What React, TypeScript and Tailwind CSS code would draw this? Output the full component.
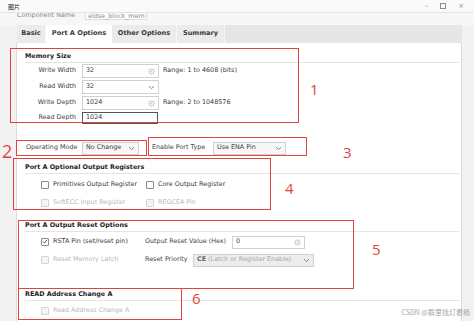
import React from 'react';

const RED = 'border-[#e0443c]';

const Chevron = () => (
  <svg width="7" height="5" viewBox="0 0 7 5" className="shrink-0">
    <path d="M1 1.2 L3.5 3.6 L6 1.2" fill="none" stroke="#777" strokeWidth="0.9" />
  </svg>
);

const ClearIcon = () => (
  <svg width="7" height="7" viewBox="0 0 7 7" className="shrink-0">
    <circle cx="3.5" cy="3.5" r="2.6" fill="none" stroke="#b5b5b5" strokeWidth="0.8" />
    <circle cx="3.5" cy="3.5" r="1" fill="#c8c8c8" />
  </svg>
);

const Check = ({ checked = false, disabled = false, label }: { checked?: boolean; disabled?: boolean; label: string }) => (
  <div className={`flex items-center gap-[4px] ${disabled ? 'text-[#b8b8b8]' : 'text-[#3a3a3a]'}`}>
    <div
      className={`w-[8px] h-[8px] rounded-[1px] border flex items-center justify-center ${
        disabled ? 'border-[#d4d4d4] bg-[#f4f4f4]' : 'border-[#8a8a8a] bg-white'
      }`}
    >
      {checked && (
        <svg width="7" height="7" viewBox="0 0 7 7">
          <path d="M1.2 3.6 L2.8 5.2 L5.9 1.6" fill="none" stroke="#333" strokeWidth="1" />
        </svg>
      )}
    </div>
    <span>{label}</span>
  </div>
);

const TextBox = ({ value, width, icon = true, focused = false, height = 'h-[14px]' }: { value: string; width: string; icon?: boolean; focused?: boolean; height?: string }) => (
  <div
    className={`${width} ${height} flex items-center justify-between px-[3px] bg-white border ${
      focused ? 'border-[#555]' : 'border-[#d0d0d0]'
    }`}
  >
    <span>{value}</span>
    {icon && <ClearIcon />}
  </div>
);

const Select = ({ value, width, muted = false }: { value: React.ReactNode; width: string; muted?: boolean }) => (
  <div
    className={`${width} h-[13px] flex items-center justify-between px-[3px] border border-[#d0d0d0] ${
      muted ? 'bg-[#ededed] text-[#a8a8a8]' : 'bg-[#f7f7f7]'
    }`}
  >
    <span className="whitespace-nowrap">{value}</span>
    <Chevron />
  </div>
);

const Header = ({ title, className = '' }: { title: string; className?: string }) => (
  <div className={`h-[11px] ml-[8px] mr-[2px] flex items-center font-bold text-[#222] border-b border-[#e4e4e4] ${className}`}>
    {title}
  </div>
);

const Label = ({ text }: { text: string }) => (
  <div className="w-[60px] pr-[1px] text-right text-[#444] whitespace-nowrap">{text}</div>
);

export default function App() {
  return (
    <div className="relative w-[474px] h-[321px] overflow-hidden bg-[#f2f2f2] font-['DejaVu_Sans',sans-serif] text-[6.4px] text-[#3a3a3a]">
      {/* title bar */}
      <div className="h-[12px] bg-[#fafafa] flex items-center justify-between pl-[8px] pr-[10px]">
        <span className="text-[6px] text-[#222] font-['Noto_Sans_CJK_SC',sans-serif]">图片</span>
        <div className="flex items-center gap-[12px] text-[#8c8c8c] text-[7px]">
          <span>–</span>
          <span className="w-[6px] h-[6px] border border-[#8c8c8c]" />
          <span>×</span>
        </div>
      </div>

      {/* component name (cut off) */}
      <div className="h-[13px] bg-[#f7f7f7] border-t border-[#e4e4e4] flex items-start pl-[17px] overflow-hidden">
        <div className="flex items-center gap-[10px] -mt-[2px] text-[#888]">
          <span>Component Name</span>
          <span className="w-[62px] h-[9px] bg-white border border-[#ddd] px-[2px] leading-[8px]">eldse_block_mem</span>
        </div>
      </div>

      {/* tabs */}
      <div className="h-[18px] ml-[17px] w-[445px] bg-[#e6e6e6] flex items-stretch font-bold text-[6.6px] text-[#3a3a3a]">
        <div className="w-[29px] flex items-center justify-center bg-[#ebebeb] border-r border-[#f6f6f6]">Basic</div>
        <div className="w-[66px] flex items-center justify-center bg-white">Port A Options</div>
        <div className="w-[65px] flex items-center justify-center bg-[#ebebeb] border-r border-[#f6f6f6]">Other Options</div>
        <div className="w-[48px] flex items-center justify-center bg-[#ebebeb] border-r border-[#f6f6f6]">Summary</div>
      </div>

      {/* panel */}
      <div className="absolute left-[16px] top-[43px] w-[446px] bottom-0 bg-white border-l border-r border-[#dcdcdc] flex flex-col">
        <Header title="Memory Size" className="mt-[9px]" />
        <div className="h-[16px] flex items-center gap-[5px]">
          <Label text="Write Width" />
          <TextBox value="32" width="w-[77px]" />
          <span className="ml-[-1px]">Range: 1 to 4608 (bits)</span>
        </div>
        <div className="h-[16px] flex items-center gap-[5px]">
          <Label text="Read Width" />
          <div className="w-[77px] h-[14px] flex items-center justify-between px-[3px] bg-white border border-[#d0d0d0]">
            <span>32</span>
            <Chevron />
          </div>
        </div>
        <div className="h-[16px] flex items-center gap-[5px]">
          <Label text="Write Depth" />
          <TextBox value="1024" width="w-[77px]" />
          <span className="ml-[-1px]">Range: 2 to 1048576</span>
        </div>
        <div className="h-[13px] flex items-center gap-[5px]">
          <Label text="Read Depth" />
          <TextBox value="1024" width="w-[76px]" icon={false} focused height="h-[12px]" />
        </div>

        <div className="h-[16px] mt-[16px] flex items-center">
          <span className="ml-[9px] w-[56px] text-[#444]">Operating Mode</span>
          <Select value="No Change" width="w-[57px]" />
          <span className="ml-[13px] w-[61px] text-[#444]">Enable Port Type</span>
          <Select value="Use ENA Pin" width="w-[73px]" />
        </div>

        <Header title="Port A Optional Output Registers" className="mt-[7px]" />
        <div className="h-[16px] mt-[3px] flex items-center pl-[24px]">
          <div className="w-[105px]">
            <Check label="Primitives Output Register" />
          </div>
          <Check label="Core Output Register" />
        </div>
        <div className="h-[16px] mt-[2px] flex items-center pl-[24px]">
          <div className="w-[105px]">
            <Check label="SoftECC Input Register" disabled />
          </div>
          <Check label="REGCEA Pin" disabled />
        </div>

        <Header title="Port A Output Reset Options" className="mt-[10px]" />
        <div className="h-[16px] mt-[2px] flex items-center pl-[24px]">
          <div className="w-[104px]">
            <Check label="RSTA Pin (set/reset pin)" checked />
          </div>
          <span className="w-[87px] text-[#444]">Output Reset Value (Hex)</span>
          <TextBox value="0" width="w-[73px]" height="h-[13px]" />
        </div>
        <div className="h-[16px] mt-[2px] flex items-center pl-[24px]">
          <div className="w-[104px]">
            <Check label="Reset Memory Latch" disabled />
          </div>
          <span className="w-[48px] text-[#444]">Reset Priority</span>
          <Select
            muted
            width="w-[121px]"
            value={
              <>
                <b className="text-[#666]">CE</b> (Latch or Register Enable)
              </>
            }
          />
        </div>

        <Header title="READ Address Change A" className="mt-[22px]" />
        <div className="h-[16px] mt-[2px] flex items-center pl-[24px]">
          <Check label="Read Address Change A" disabled />
        </div>
      </div>

      {/* watermark */}
      <div className="absolute right-[4px] bottom-[4px] text-[7px] text-[#a5a5a5] font-['Noto_Sans_CJK_SC',sans-serif]">
        CSDN @群里找灯看杨
      </div>

      {/* annotation boxes */}
      <div className={`absolute left-[10px] top-[48px] w-[289px] h-[75px] border-[1.5px] ${RED}`} />
      <div className={`absolute left-[16px] top-[140px] w-[131px] h-[16px] border-[1.5px] ${RED}`} />
      <div className={`absolute left-[148px] top-[137px] w-[159px] h-[19px] border-[1.5px] ${RED}`} />
      <div className={`absolute left-[13px] top-[158px] w-[258px] h-[52px] border-[1.5px] ${RED}`} />
      <div className={`absolute left-[18px] top-[220px] w-[336px] h-[69px] border-[1.5px] ${RED}`} />
      <div className={`absolute left-[18px] top-[288px] w-[164px] h-[32px] border-[1.5px] ${RED}`} />

      {/* annotation numbers */}
      <span className="absolute left-[310px] top-[82px] text-[15px] leading-none text-[#e0443c] font-['Open_Sans',sans-serif]">1</span>
      <span className="absolute left-[2px] top-[142px] text-[18px] leading-none text-[#e0443c] font-['Open_Sans',sans-serif]">2</span>
      <span className="absolute left-[343px] top-[145px] text-[15px] leading-none text-[#e0443c] font-['Open_Sans',sans-serif]">3</span>
      <span className="absolute left-[285px] top-[181px] text-[15px] leading-none text-[#e0443c] font-['Open_Sans',sans-serif]">4</span>
      <span className="absolute left-[372px] top-[242px] text-[15px] leading-none text-[#e0443c] font-['Open_Sans',sans-serif]">5</span>
      <span className="absolute left-[192px] top-[291px] text-[15px] leading-none text-[#e0443c] font-['Open_Sans',sans-serif]">6</span>
    </div>
  );
}
